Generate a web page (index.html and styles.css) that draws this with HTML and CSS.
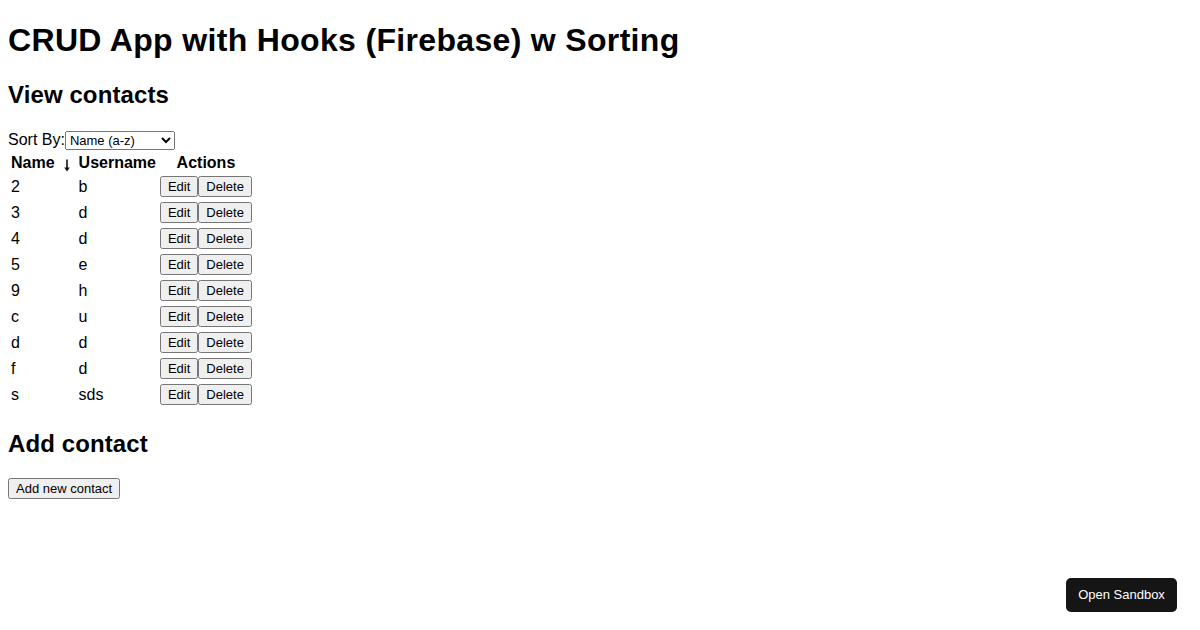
FILE: index.html
```html
<!DOCTYPE html>
<html>
<head>
<meta charset="utf-8">
<link rel="stylesheet" href="styles.css">
</head>
<body>
<div class="app">
  <h1 class="title">CRUD App with Hooks (Firebase) w Sorting</h1>
  <h2 class="section">View contacts</h2>
  <div class="sort">
    <label>Sort By:</label><select class="sort-select"><option>Name (a-z)</option><option>Name (z-a)</option><option>Username (a-z)</option><option>Username (z-a)</option></select>
  </div>
  <table class="contacts">
    <thead>
      <tr><th>Name<svg class="arrow" width="8" height="13" viewBox="0 0 8 13"><path d="M4 0.5V11" stroke="#111" stroke-width="1.6" fill="none"/><path d="M1.2 8.4L4 12.6L6.8 8.4Z" fill="#111"/></svg></th><th>Username</th><th class="actions-head">Actions</th></tr>
    </thead>
    <tbody>
      <tr><td>2</td><td>b</td><td><button>Edit</button><button>Delete</button></td></tr>
      <tr><td>3</td><td>d</td><td><button>Edit</button><button>Delete</button></td></tr>
      <tr><td>4</td><td>d</td><td><button>Edit</button><button>Delete</button></td></tr>
      <tr><td>5</td><td>e</td><td><button>Edit</button><button>Delete</button></td></tr>
      <tr><td>9</td><td>h</td><td><button>Edit</button><button>Delete</button></td></tr>
      <tr><td>c</td><td>u</td><td><button>Edit</button><button>Delete</button></td></tr>
      <tr><td>d</td><td>d</td><td><button>Edit</button><button>Delete</button></td></tr>
      <tr><td>f</td><td>d</td><td><button>Edit</button><button>Delete</button></td></tr>
      <tr><td>s</td><td>sds</td><td><button>Edit</button><button>Delete</button></td></tr>
    </tbody>
  </table>
  <h2 class="section add-section">Add contact</h2>
  <button>Add new contact</button>
</div>
<a class="sandbox-btn">Open Sandbox</a>
</body>
</html>
```
FILE: styles.css
```css
html {
  margin: 0;
  padding: 0;
}
body {
  margin: 0;
  padding: 0 8px 8px;
  font-family: "Liberation Sans", Arial, sans-serif;
  font-size: 16px;
  line-height: 1.2;
  color: #000;
  background: #fff;
}
.title {
  font-size: 32px;
  margin: 21.44px 0;
  letter-spacing: 0.33px;
}
.section {
  font-size: 24px;
  margin: 19.92px 0;
  letter-spacing: 0.1px;
}
.add-section {
  margin-top: 21px;
  margin-bottom: 19px;
}
button, select {
  font-family: "Liberation Sans", Arial, sans-serif;
  font-size: 13px;
}
.contacts button {
  padding: 1px 6px;
}
.sort-select {
  width: 110px;
}
.contacts {
  border-spacing: 2px;
}
.contacts td, .contacts th {
  text-align: left;
  padding: 1px;
}
.contacts th {
  height: 19px;
  line-height: 19px;
}
.contacts td {
  height: 22px;
}
.contacts .actions-head {
  text-align: center;
}
.arrow {
  display: inline-block;
  vertical-align: -4px;
  margin: 0 4px 0 8px;
}
.sandbox-btn {
  position: fixed;
  right: 23px;
  bottom: 18px;
  width: 111px;
  height: 34px;
  box-sizing: border-box;
  display: flex;
  align-items: center;
  justify-content: center;
  background: #151515;
  color: #fff;
  font-size: 13px;
  border-radius: 5px;
  font-family: "Liberation Sans", Arial, sans-serif;
}
```
